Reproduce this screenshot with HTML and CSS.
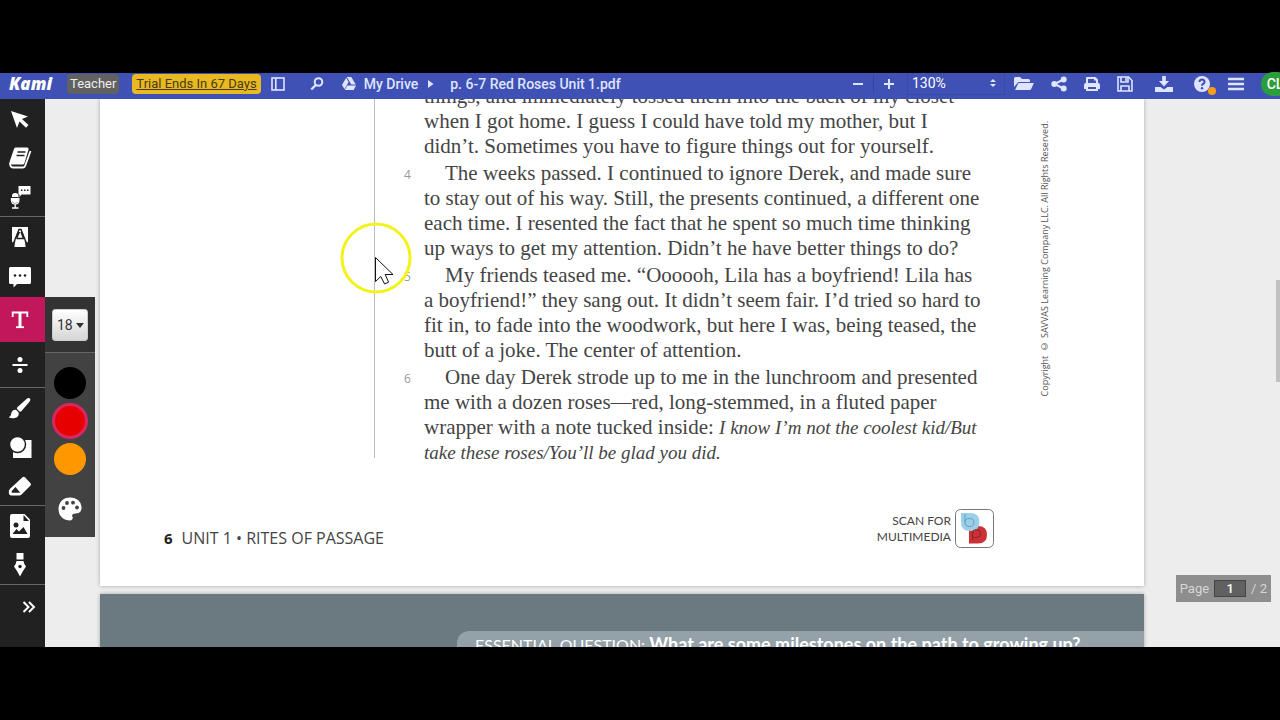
FILE: index.html
```html
<!DOCTYPE html>
<html lang="en">
<head>
  <meta charset="UTF-8" />
  <meta name="viewport" content="width=device-width, initial-scale=1.0" />
  <title>p. 6-7 Red Roses Unit 1.pdf - Kami</title>
  <link rel="stylesheet" href="styles.css">
</head>
<body>
  <div class="app">

    <header class="topbar">
      <a href="#" class="brand">Kami</a>
      <span class="plan">Teacher</span>
      <a href="#" class="trial">Trial Ends In 67 Days</a>
      <button class="bar-btn panel-btn" aria-label="Toggle sidebar">
        <svg width="14" height="14" viewBox="0 0 14 14"><rect x="1" y="1" width="12" height="12" fill="none" stroke="currentColor" stroke-width="1.600"/><path d="M4.800 1v12" stroke="currentColor" stroke-width="1.600"/></svg>
      </button>
      <button class="bar-btn search-btn" aria-label="Search">
        <svg width="14" height="14" viewBox="0 0 14 14"><circle cx="8.5" cy="5" r="3.8" fill="none" stroke="currentColor" stroke-width="2"/><path d="M5.7 8L1.3 12.5" stroke="currentColor" stroke-width="2.4"/></svg>
      </button>
      <nav class="crumbs">
        <svg width="14" height="13" viewBox="0 0 14 13" fill="currentColor"><path d="M4.800 0h4.400l4.600 7.600H9.300z"/><path d="M4.200.8l2.400 4.100L2.500 12.300 0 8z"/><path d="M5.200 8.400H14L11.700 13H2.900z"/></svg>
        <a href="#">My Drive</a>
        <svg class="crumb-arrow" width="6" height="8" viewBox="0 0 6 8" fill="currentColor"><path d="M0 0l5.500 4L0 8z"/></svg>
        <a href="#">p. 6-7 Red Roses Unit 1.pdf</a>
      </nav>

      <div class="bar-right">
        <button class="bar-btn" aria-label="Zoom out">
          <svg width="12" height="12" viewBox="0 0 12 12"><path d="M1 6h10" stroke="currentColor" stroke-width="2"/></svg>
        </button>
        <span class="bar-sep"></span>
        <button class="bar-btn" aria-label="Zoom in">
          <svg width="12" height="12" viewBox="0 0 12 12"><path d="M1 6h10M6 1v10" stroke="currentColor" stroke-width="2"/></svg>
        </button>
        <div class="zoom">
          <select aria-label="Zoom level"><option>130%</option></select>
          <svg width="6" height="8" viewBox="0 0 6 8" fill="currentColor"><path d="M0 3l3-3 3 3zM0 5l3 3 3-3z"/></svg>
        </div>
        <div class="actions">
          <button class="bar-btn" aria-label="Open">
            <svg width="20" height="16" viewBox="0 0 20 16" fill="currentColor"><path d="M0 11V2.500Q0 1 1.500 1H6l2 2h6.500Q16 3 16 4.500V6H5Q4 6 3.500 7z"/><path d="M5.400 7H19.500Q20 7 19.700 7.600L17 13.200Q16.600 14 15.700 14H1.600Q1 14 1.300 13.400L4 7.800Q4.400 7 5.400 7z"/></svg>
          </button>
          <button class="bar-btn" aria-label="Share">
            <svg width="16" height="16" viewBox="0 0 16 16"><path d="M12.500 3.500L3.500 8l9 4.500" fill="none" stroke="currentColor" stroke-width="2"/><g fill="currentColor"><circle cx="12.700" cy="3.500" r="3"/><circle cx="3.300" cy="8" r="3"/><circle cx="12.700" cy="12.500" r="3"/></g></svg>
          </button>
          <button class="bar-btn" aria-label="Print">
            <svg width="16" height="16" viewBox="0 0 16 16"><path fill="currentColor" fill-rule="evenodd" d="M2 7V2Q2 1 3 1h8.500L14 3.500V7q2 0 2 2v4h-2v2H2v-2H0V9q0-2 2-2zm2 0h8V4.500h-2V3H4zm0 4v2h8v-2z"/></svg>
          </button>
          <button class="bar-btn" aria-label="Save">
            <svg width="16" height="16" viewBox="0 0 16 16" fill="none" stroke="currentColor" stroke-width="1.600"><path d="M1 1h10.500L15 4.500V15H1z"/><path d="M4 1v5h7V1M4 15v-5h8v5"/><path d="M9 2v3"/></svg>
          </button>
          <button class="bar-btn download" aria-label="Download">
            <svg width="18" height="16" viewBox="0 0 18 16" fill="currentColor"><path d="M7.200 0h3.600v5H14l-5 5.500L4 5h3.200z"/><path d="M0 11h5.500L9 13.500 12.500 11H18v5H0z"/></svg>
          </button>
          <button class="bar-btn help" aria-label="Help">
            <svg width="16" height="16" viewBox="0 0 16 16"><circle cx="8" cy="8" r="8" fill="currentColor"/><path d="M5.500 6q0-2.500 2.500-2.500T10.500 6Q10.500 7.300 9 8q-1 .5-1 1.800" fill="none" stroke="#3f51b5" stroke-width="2"/><circle cx="8" cy="12.200" r="1.200" fill="#3f51b5"/></svg>
            <span class="dot"></span>
          </button>
          <button class="bar-btn" aria-label="Menu">
            <svg width="16" height="14" viewBox="0 0 16 14"><path d="M0 2h16M0 7h16M0 12h16" stroke="currentColor" stroke-width="2.400"/></svg>
          </button>
        </div>
        <button class="avatar" aria-label="Account">CL</button>
      </div>
    </header>

    <div class="workspace">
      <aside class="toolbar">
        <div class="tool-group">
          <button class="tool" aria-label="Select">
            <svg width="24" height="24" viewBox="0 0 24 24" fill="currentColor"><path d="M3 4l17 5.500-6 2.500 6.500 6-2.500 2.700-6.500-6.200L9 21z"/></svg>
          </button>
          <button class="tool" aria-label="Dictionary">
            <svg width="24" height="24" viewBox="0 0 24 24"><path d="M7.500 1.500H19q2 0 1.500 2L16.500 17q-.5 1.500-2 1.500H2.500Q1 18 1.500 16L6 3q.4-1.500 1.500-1.500z" fill="currentColor"/><path d="M2 17q0 4.500 3 4.500h10q1.700 0 2.300-2L22.500 5" fill="none" stroke="currentColor" stroke-width="1.800"/><path d="M9.500 6h8M8.500 9.500h8" stroke="#212121" stroke-width="1.500"/></svg>
          </button>
          <button class="tool" aria-label="Text to speech">
            <svg width="24" height="24" viewBox="0 0 24 24"><rect x="4" y="8" width="6.500" height="10" rx="3.200" fill="currentColor"/><path d="M3.500 13v2q0 4 3.700 4t3.700-4v-2M7.200 19v4M4 23h6.500" fill="none" stroke="currentColor" stroke-width="1.300"/><path d="M4 12.500h6.500" stroke="#212121"/><path d="M10.500 1h12v8.500h-9L11.500 12V9.500h-1z" fill="currentColor"/><path d="M13 5.300h7.500" stroke="#212121" stroke-width="1.500" stroke-dasharray="1.500 1.500"/></svg>
          </button>
        </div>
        <div class="tool-group middle">
          <button class="tool" aria-label="Markup">
            <svg width="24" height="24" viewBox="0 0 24 24"><path d="M4 2h16v15l-2.500 2V22h-11v-3L4 17z" fill="currentColor"/><path d="M5.500 20.500L7 14.500 11 4.500h2l4 10 1.500 6M8.500 13.500h7L13 7M8.500 13.500L11.500 7" fill="none" stroke="#212121" stroke-width="1.400"/><path d="M3.500 18.500L6 16v7H3.500zM20.500 18.500L18 16v7h2.500z" fill="#212121"/></svg>
          </button>
          <button class="tool" aria-label="Comment">
            <svg width="24" height="24" viewBox="0 0 24 24"><path d="M2.500 2h19q1.500 0 1.500 1.500v14q0 1.500-1.500 1.500H9l-3.500 3.500V19h-3Q1 19 1 17.500v-14Q1 2 2.500 2z" fill="currentColor"/><g fill="#212121"><circle cx="7" cy="10.500" r="1.300"/><circle cx="12" cy="10.500" r="1.300"/><circle cx="17" cy="10.500" r="1.300"/></g></svg>
          </button>
          <button class="tool tall active" aria-label="Text">
            <svg width="24" height="24" viewBox="0 0 24 24" fill="none" stroke="currentColor"><path d="M4.700 9V4.500h14.600V9" stroke-width="1.800"/><path d="M12 4v15" stroke-width="3"/><path d="M8 19.200h8" stroke-width="1.800"/></svg>
          </button>
          <button class="tool tall" aria-label="Equation">
            <svg width="24" height="24" viewBox="0 0 24 24" fill="currentColor"><circle cx="12" cy="6.500" r="2.500"/><circle cx="12" cy="17.500" r="2.500"/><path d="M4.500 11h15v2h-15z"/></svg>
          </button>
        </div>
        <div class="tool-group">
          <button class="tool" aria-label="Drawing">
            <svg width="24" height="24" viewBox="0 0 24 24" fill="currentColor"><path d="M22 2.500q1 1.500-.5 3.200L13.500 15q-1.300 1.300-2.500 0L9.300 13.300q-1-1.200.3-2.300L18.500 3q2-1.600 3.500-.5z"/><path d="M8 13.700l2.700 2.700q.5 4.600-4 5.600-3.200.7-6-.7Q3 20.500 3.200 17.500 3.800 13.500 8 13.700z"/></svg>
          </button>
          <button class="tool" aria-label="Shapes">
            <svg width="24" height="24" viewBox="0 0 24 24" fill="currentColor"><path d="M5 5h18.500v18H5z"/><circle cx="9.500" cy="9.500" r="8" stroke="#212121" stroke-width="1.500"/></svg>
          </button>
          <button class="tool" aria-label="Eraser">
            <svg width="24" height="24" viewBox="0 0 24 24"><path d="M14.500 3.200q1.200-1 2.500 0l5.500 6q1 1.200 0 2.400L13.500 20.500q-1 1-2.500 1H3Q1 21 .8 19q-.2-2.500 1-4z" fill="currentColor"/><path d="M7.500 13l4.800 5.700H4q-1-.5 0-2z" fill="#212121"/></svg>
          </button>
        </div>
        <div class="tool-group">
          <button class="tool" aria-label="Image">
            <svg width="24" height="24" viewBox="0 0 24 24"><path d="M4 0h12.500L22 5.500V22q0 2-2 2H4q-2 0-2-2V2q0-2 2-2z" fill="currentColor"/><path d="M15.500 1v6H21M4.500 20l4-5 2.500 2.500 4.500-4.500 4 7z" fill="#212121"/><circle cx="8" cy="11" r="2.500" fill="#212121"/></svg>
          </button>
          <button class="tool" aria-label="Signature">
            <svg width="24" height="24" viewBox="0 0 24 24"><path d="M8.500 0h7v6.500h-7zM8.500 8h7q.5 3.500 2.500 5.500-3 4-6 10-3-6-6-10Q8 11.500 8.500 8z" fill="currentColor"/><circle cx="12" cy="13.500" r="1.700" fill="#212121"/></svg>
          </button>
        </div>
        <button class="tool expand" aria-label="Expand toolbar">
          <svg width="14" height="14" viewBox="0 0 14 14" fill="none" stroke="currentColor" stroke-width="2"><path d="M1.500 2l5 5-5 5M7 2l5 5-5 5"/></svg>
        </button>
      </aside>

      <div class="options">
        <div class="size">
          <select aria-label="Font size"><option>18</option></select>
          <svg width="8" height="5" viewBox="0 0 8 5"><path d="M0 0h8L4 5z" fill="#333"/></svg>
        </div>
        <div class="swatches">
          <button class="swatch black" aria-label="Black"></button>
          <button class="swatch red" aria-label="Red"></button>
          <button class="swatch orange" aria-label="Orange"></button>
          <button class="palette" aria-label="More colors">
            <svg width="24" height="24" viewBox="0 0 24 24"><path d="M12 .5q5 0 8.500 3T23.500 11q0 5-5.500 5.500-3.500-.3-4 2 0 .8.600 1.500.8 2.500-2 3.500Q7 23.500 3.700 20.200.5 17 .5 12T3.700 3.700Q7 .5 12 .5z" fill="#fff"/><g fill="#424242"><circle cx="5.500" cy="11" r="1.900"/><circle cx="9" cy="6" r="1.900"/><circle cx="15" cy="5.700" r="1.900"/><circle cx="19" cy="10.500" r="1.900"/></g></svg>
          </button>
        </div>
      </div>

      <main class="viewer">
        <section class="page">
          <div class="page-body">
            <article class="story">
              <div class="para">
                <p class="first">things, and immediately tossed them into the back of my closet<br>when I got home. I guess I could have told my mother, but I<br>didn’t. Sometimes you have to figure things out for yourself.</p>
              </div>
              <div class="para">
                <span class="num">4</span>
                <p>The weeks passed. I continued to ignore Derek, and made sure<br>to stay out of his way. Still, the presents continued, a different one<br>each time. I resented the fact that he spent so much time thinking<br>up ways to get my attention. Didn’t he have better things to do?</p>
              </div>
              <div class="para">
                <span class="num">5</span>
                <p>My friends teased me. “Oooooh, Lila has a boyfriend! Lila has<br>a boyfriend!” they sang out. It didn’t seem fair. I’d tried so hard to<br>fit in, to fade into the woodwork, but here I was, being teased, the<br>butt of a joke. The center of attention.</p>
              </div>
              <div class="para">
                <span class="num">6</span>
                <p>One day Derek strode up to me in the lunchroom and presented<br>me with a dozen roses—red, long-stemmed, in a fluted paper<br>wrapper with a note tucked inside: <em>I know I’m not the coolest kid/But<br>take these roses/You’ll be glad you did.</em></p>
              </div>
            </article>
            <small class="copyright">Copyright © SAVVAS Learning Company LLC. All Rights Reserved.</small>
          </div>
          <footer class="page-footer">
            <p class="folio"><b>6</b>UNIT 1 • RITES OF PASSAGE</p>
            <div class="scan">
              <p>SCAN FOR<br>MULTIMEDIA</p>
              <svg class="badge" width="39" height="39" viewBox="0 0 39 39">
                <rect x=".5" y=".5" width="38" height="38" rx="5" fill="#fff" stroke="#777"/>
                <path d="M14 17h9q9 0 9 8.800 0 8.700-9 8.700h-9z" fill="#cb3236"/>
                <path d="M6 4h9q9.500 0 9.500 9t-9.500 9Q6 22 6 13z" fill="#9dcfe8"/>
                <path d="M10 5v8q0 4.500 4.500 4.500T19 13.500 14.500 9.500 10 13" fill="none" stroke="#5a9fc4"/>
                <path d="M17.500 31v-7q0-3.500 4-3.500t4 4-4 4h-4" fill="none" stroke="#8e2228"/>
              </svg>
            </div>
          </footer>
        </section>

        <section class="page next-page">
          <h2>ESSENTIAL QUESTION: <span>What are some milestones on the path to growing up?</span></h2>
        </section>
      </main>

      <span class="scroll-thumb"></span>
      <label class="page-nav">Page <input type="text" value="1"> / 2</label>
      <div class="pointer">
        <svg width="72" height="72" viewBox="0 0 72 72"><circle cx="36" cy="36" r="34" fill="none" stroke="#f2f21c" stroke-width="3"/><path d="M35.500 35.500v24l5.300-5 3.800 7.500 4-1.800-3.400-7.700h7.800z" fill="#fff" stroke="#111" stroke-width="1"/></svg>
      </div>
    </div>

  </div>
</body>
</html>
```

FILE: styles.css
```css
* { box-sizing: border-box; }
body { margin: 0; background-color: #000; font-family: Roboto, "Liberation Sans", sans-serif; }
p, h2 { margin: 0; font-weight: normal; }
a { color: inherit; text-decoration: none; }
button { border: none; background: none; padding: 0; font: inherit; color: inherit; cursor: pointer; }
svg { display: block; flex: none; }

.app { height: 100vh; padding: 73px 0; display: flex; flex-direction: column; overflow: hidden; }

/* Top bar */
.topbar {
  display: flex; align-items: center; flex: none; height: 26px; padding: 0 0 5px 9px;
  background-color: #3f51b5; color: #dfe4ff; font-size: 14px; white-space: nowrap;
}
.brand { width: 58px; font: italic 800 17px/20px "Open Sans", sans-serif; color: #fff; }
.plan { padding: 0 3px; font-size: 13px; line-height: 20px; border-radius: 4px; background-color: #616161; color: #eee; }
.trial {
  margin-left: 13px; padding: 0 4px; font-size: 13px; line-height: 20px; border-radius: 4px;
  background-color: #e8b923; color: #4a3b10; text-decoration: underline;
}
.bar-btn { display: flex; align-items: center; justify-content: center; flex: none; }
.panel-btn { margin-left: 10px; }
.search-btn { margin-left: 25px; }
.crumbs { display: flex; align-items: center; gap: 8px; margin-left: 18px; font-weight: 500; }
.crumb-arrow { margin: 0 8px 0 2px; }
.bar-right { display: flex; align-items: center; margin: 0 -9px 0 auto; }
.bar-sep { width: 1px; height: 18px; margin: 0 9px; background-color: #34449c; }
.zoom { position: relative; margin: 0 9px 0 12px; }
.zoom select {
  appearance: none; display: block; width: 98px; height: 22px; padding: 0 4px; border: 1px solid #3949a5;
  border-top: none; background: none; color: #fff; font: 14px/20px Roboto, sans-serif;
}
.zoom svg { position: absolute; right: 9px; top: 6px; pointer-events: none; }
.actions { display: flex; align-items: center; gap: 17px; }
.download { margin-left: 5px; }
.help { position: relative; width: 18px; margin-left: 3px; }
.dot { position: absolute; right: -5px; bottom: -3px; width: 8px; height: 8px; border-radius: 50%; background-color: #ff9d18; }
.avatar { width: 28px; height: 24px; margin-left: 17px; border-radius: 12px; background-color: #2a9d3c; color: #fff; font-weight: 500; }

/* Tools */
.workspace { position: relative; flex: 1; min-height: 0; display: flex; overflow: hidden; background-color: #ededed; }
.toolbar { flex: none; width: 45px; background-color: #212121; color: #fff; overflow: hidden; }
.tool-group { display: flex; flex-direction: column; border-bottom: 1px solid #666; }
.tool-group.middle { gap: 1px; }
.tool { display: flex; align-items: center; justify-content: center; width: 45px; height: 39px; padding-right: 6px; }
.tool.tall { height: 44px; }
.tool.active { height: 45px; background-color: #c2185b; }
.tool.expand { height: 44px; padding: 0 0 0 12px; }

.options { position: absolute; left: 45px; top: 198px; width: 50px; height: 240px; background-color: #424242; z-index: 2; }
.size { position: relative; padding: 12px 7px; height: 56px; background-color: #333; border-bottom: 1px solid #666; }
.size select {
  appearance: none; display: block; width: 36px; height: 32px; padding: 0 4px; border: 1px solid #ccc; border-radius: 3px;
  background: linear-gradient(#fff, #d5d5d5); color: #333; font: 14px Roboto, sans-serif;
}
.size svg { position: absolute; right: 11px; top: 26px; pointer-events: none; }
.swatches { display: flex; flex-direction: column; align-items: center; padding-top: 12px; gap: 2px; }
.swatch { width: 36px; height: 36px; border: 2px solid #424242; border-radius: 50%; }
.black { background-color: #000; }
.red { background-color: #e60000; border-color: #d82661; border-width: 3px; }
.orange { background-color: #ff9800; }
.palette { margin-top: 18px; }

/* Document */
.viewer { flex: 1; min-width: 0; padding: 0 136px 0 55px; overflow: hidden; background-color: #ededed; }
.page { background-color: #fff; box-shadow: 0 0 4px rgba(0,0,0,0.3); margin-bottom: 8px; }
.page-body { display: flex; padding-left: 274px; }
.story {
  flex: none; width: 664px; margin-top: -15px; padding-left: 28px; border-left: 1px solid #bbb;
  font-family: "Liberation Serif", serif; font-size: 21px; line-height: 25px; color: #444; white-space: nowrap;
}
.story em { font-size: 19px; }
.para { display: flex; margin-bottom: 2px; }
.para:last-child { margin-bottom: -7px; }
.para p { text-indent: 21px; margin-left: 21px; }
.para .num + p { margin-left: 0; }
.para p.first { text-indent: 0; }
.num { width: 21px; padding-left: 1px; font: 12px/28px "Open Sans", sans-serif; color: #999; }
.copyright {
  margin-top: 22px; writing-mode: vertical-rl; transform: rotate(180deg); align-self: flex-start;
  font: 9px/14px "Open Sans", sans-serif; color: #555; white-space: nowrap;
}
.page-footer { display: flex; align-items: center; justify-content: space-between; padding: 51px 150px 38px 64px; color: #444; }
.folio { font: 16px/20px "Open Sans", sans-serif; padding-top: 19px; }
.folio b { margin-right: 9px; font-size: 15px; color: #222; }
.scan { display: flex; align-items: center; gap: 4px; text-align: right; font: 12px/16px Lato, sans-serif; }

.next-page { height: 400px; padding: 37px 0 0 357px; background-color: #6b7980; }
.next-page h2 {
  height: 60px; padding: 3px 18px; border-radius: 12px 0 0 0; background-color: #94a1a8;
  color: #fff; font: 16px/20px Lato, sans-serif; white-space: nowrap;
}
.next-page span { font-size: 18px; font-weight: bold; }

.scroll-thumb { position: absolute; right: 0; top: 181px; width: 4px; height: 102px; background-color: #c1c1c1; }
.page-nav {
  position: absolute; right: 9px; bottom: 45px; display: flex; align-items: center; gap: 5px; padding: 5px 4px;
  background-color: #8e8e8e; color: #d6d6d6; font-size: 13px; line-height: 17px; white-space: nowrap;
}
.page-nav input { width: 32px; height: 17px; padding: 0; border: 1px solid #444; background-color: #616161; color: #fff; font: 500 13px Roboto, sans-serif; text-align: center; }
.pointer { position: absolute; left: 340px; top: 123px; z-index: 3; pointer-events: none; }
```
